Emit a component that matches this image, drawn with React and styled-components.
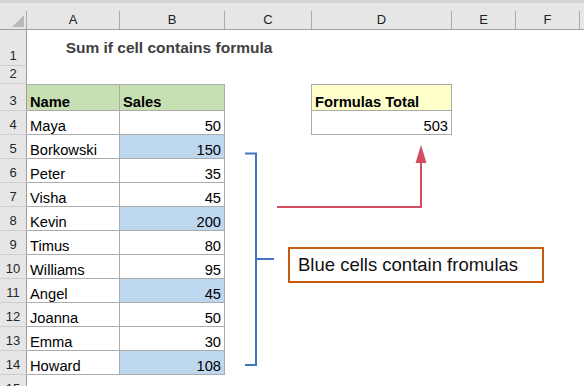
import React from "react";
import styled, { createGlobalStyle } from "styled-components";

const GlobalStyle = createGlobalStyle`
  body {
    margin: 0;
    background: #fff;
    font-family: "Liberation Sans", Arial, sans-serif;
    overflow: hidden;
  }
`;

const columns = [
  { key: "A", w: 93 },
  { key: "B", w: 105 },
  { key: "C", w: 87 },
  { key: "D", w: 140 },
  { key: "E", w: 64 },
  { key: "F", w: 64 },
  { key: "G", w: 64 },
];

const sales = [
  { name: "Maya", value: 50 },
  { name: "Borkowski", value: 150, formula: true },
  { name: "Peter", value: 35 },
  { name: "Visha", value: 45 },
  { name: "Kevin", value: 200, formula: true },
  { name: "Timus", value: 80 },
  { name: "Williams", value: 95 },
  { name: "Angel", value: 45, formula: true },
  { name: "Joanna", value: 50 },
  { name: "Emma", value: 30 },
  { name: "Howard", value: 108, formula: true },
];

export default function App() {
  return (
    <>
      <GlobalStyle />
      <Sheet>
        <HeaderBar>
          <Corner>
            <svg width="14" height="14" viewBox="0 0 14 14">
              <polygon points="13,1 13,13 1,13" fill="#b8b8b8" />
            </svg>
          </Corner>
          {columns.map(c => (
            <ColHead key={c.key} $w={c.w}>{c.key === "G" ? "" : c.key}</ColHead>
          ))}
        </HeaderBar>

        <Row $h={36}>
          <RowHead>1</RowHead>
          <Title>Sum if cell contains formula</Title>
        </Row>

        <Row $h={18}>
          <RowHead>2</RowHead>
        </Row>

        <Row $h={27}>
          <RowHead>3</RowHead>
          <Cell $w={93} $box $top $bg="#c6e0b4" $bold>Name</Cell>
          <Cell $w={105} $box $top $bg="#c6e0b4" $bold>Sales</Cell>
          <Cell $w={86} />
          <Cell $w={141} $box $top $left $bg="#ffffcc" $bold>Formulas Total</Cell>
        </Row>

        {sales.map((s, i) => (
          <Row key={s.name} $h={24}>
            <RowHead>{i + 4}</RowHead>
            <Cell $w={93} $box>{s.name}</Cell>
            <Cell $w={105} $box $right $bg={s.formula ? "#bdd7ee" : "#fff"}>{s.value}</Cell>
            {i === 0 && (
              <>
                <Cell $w={86} />
                <Cell $w={141} $box $left $right>503</Cell>
              </>
            )}
          </Row>
        ))}

        <Row $h={24}>
          <RowHead>15</RowHead>
        </Row>

        <Shapes width="584" height="386" viewBox="0 0 584 386">
          <path d="M245 153.5 H256 V365 H245" fill="none" stroke="#4472c4" strokeWidth="2" />
          <path d="M256 259 H274" fill="none" stroke="#4472c4" strokeWidth="2" />
          <path d="M277 207 H421 V160" fill="none" stroke="#d24b5e" strokeWidth="2" />
          <polygon points="421,145 415.5,163 426.5,163" fill="#d24b5e" />
        </Shapes>

        <Note>Blue cells contain fromulas</Note>
      </Sheet>
    </>
  );
}

const Sheet = styled.div`
  position: relative;
  width: 584px;
  height: 386px;
  overflow: hidden;
  background: #fff;
`;

const HeaderBar = styled.div`
  display: flex;
  align-items: flex-end;
  box-sizing: border-box;
  height: 30px;
  background: #e6e6e6;
  border-top: 3px solid #d4d4d4;
  border-bottom: 1px solid #9f9f9f;
`;

const Corner = styled.div`
  flex: none;
  width: 27px;
  height: 18px;
  box-sizing: border-box;
  border-right: 1px solid #ababab;
  display: flex;
  align-items: flex-end;
  justify-content: flex-end;
  padding: 0 1px 1px 0;
`;

const ColHead = styled.div`
  flex: none;
  width: ${p => p.$w}px;
  height: 18px;
  box-sizing: border-box;
  border-right: 1px solid #ababab;
  text-align: center;
  font-size: 13px;
  line-height: 18px;
  color: #222;
`;

const Row = styled.div`
  display: flex;
  height: ${p => p.$h}px;
`;

const RowHead = styled.div`
  flex: none;
  width: 27px;
  box-sizing: border-box;
  background: #e6e6e6;
  border-right: 1px solid #9f9f9f;
  border-bottom: 1px solid #cdcdcd;
  display: flex;
  align-items: flex-end;
  justify-content: center;
  padding-bottom: 2px;
  font-size: 13px;
  line-height: 15px;
  color: #262626;
`;

const Title = styled.div`
  width: 284px;
  display: flex;
  align-items: center;
  justify-content: center;
  font-size: 15.5px;
  font-weight: bold;
  color: #404040;
`;

const Cell = styled.div`
  flex: none;
  width: ${p => p.$w}px;
  box-sizing: border-box;
  display: flex;
  align-items: flex-end;
  justify-content: ${p => (p.$right ? "flex-end" : "flex-start")};
  padding: 0 3px 0 3px;
  font-size: 14.7px;
  line-height: 16px;
  font-weight: ${p => (p.$bold ? "bold" : "normal")};
  color: #000;
  background: ${p => p.$bg || "transparent"};
  border-right: ${p => (p.$box ? "1px solid #ababab" : "none")};
  border-bottom: ${p => (p.$box ? "1px solid #ababab" : "none")};
  border-top: ${p => (p.$top ? "1px solid #ababab" : "none")};
  border-left: ${p => (p.$left ? "1px solid #ababab" : "none")};
`;

const Shapes = styled.svg`
  position: absolute;
  left: 0;
  top: 0;
  pointer-events: none;
`;

const Note = styled.div`
  position: absolute;
  left: 288px;
  top: 247px;
  width: 256px;
  height: 36px;
  box-sizing: border-box;
  border: 2px solid #c55a11;
  background: #fff;
  display: flex;
  align-items: center;
  padding-left: 8px;
  font-size: 18.5px;
  color: #111;
`;
